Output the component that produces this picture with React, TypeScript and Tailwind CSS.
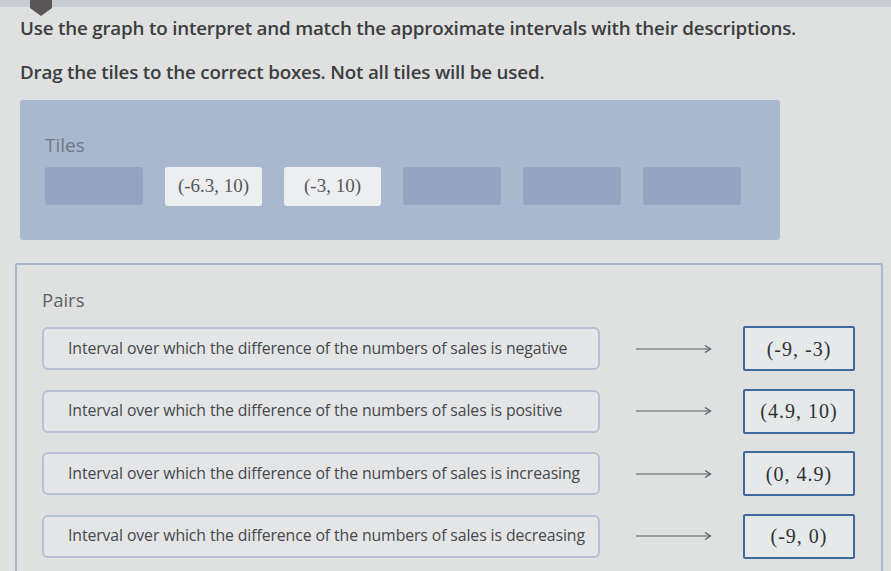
import React from 'react';

const tiles = [
    { label: null },
    { label: '(-6.3, 10)' },
    { label: '(-3, 10)' },
    { label: null },
    { label: null },
    { label: null },
];

const pairs = [
    { text: 'Interval over which the difference of the numbers of sales is negative', answer: '(-9, -3)' },
    { text: 'Interval over which the difference of the numbers of sales is positive', answer: '(4.9, 10)' },
    { text: 'Interval over which the difference of the numbers of sales is increasing', answer: '(0, 4.9)' },
    { text: 'Interval over which the difference of the numbers of sales is decreasing', answer: '(-9, 0)' },
];

const Arrow: React.FC = () => (
    <svg width="78" height="10" viewBox="0 0 78 10" className="text-[#555a60]">
        <line x1="1" y1="5" x2="75" y2="5" stroke="currentColor" strokeWidth="1.2" />
        <path d="M70 1.5 L75.5 5 L70 8.5" fill="none" stroke="currentColor" strokeWidth="1.2" />
    </svg>
);

const App: React.FC = () => {
    return (
        <div
            className="w-[891px] h-[571px] overflow-hidden bg-[#dfe1e1] text-[#3b3d40]"
            style={{ fontFamily: '"Open Sans", "Liberation Sans", sans-serif' }}
        >
            {/* Question header strip */}
            <div className="h-[7px] bg-[#c9ccd2] flex pl-[30px]">
                <svg width="22" height="17" viewBox="0 0 22 17" className="shrink-0">
                    <path d="M0 0 H22 V8 L11 16 L0 8 Z" fill="#5a5658" />
                </svg>
            </div>

            {/* Instructions */}
            <div className="pl-[20px] pt-[9px]">
                <p className="text-[18.8px] font-semibold leading-[24px] tracking-[-0.2px]">
                    Use the graph to interpret and match the approximate intervals with their descriptions.
                </p>
                <p className="mt-[20px] text-[18.8px] font-semibold leading-[24px] tracking-[-0.2px]">
                    Drag the tiles to the correct boxes. Not all tiles will be used.
                </p>
            </div>

            {/* Tiles */}
            <div className="ml-[20px] mt-[16px] w-[760px] h-[140px] rounded-[3px] bg-[#a9b8cf] pl-[25px] pt-[33px]">
                <div className="text-[19px] text-[#6f7784] leading-[24px]">Tiles</div>
                <div className="mt-[10px] flex gap-[22px]">
                    {tiles.map((t, i) =>
                        t.label ? (
                            <div
                                key={i}
                                className="w-[97px] h-[39px] rounded-[3px] bg-[#eceeef] flex items-center justify-center text-[19px] text-[#55585c]"
                                style={{ fontFamily: '"Liberation Serif", serif' }}
                            >
                                {t.label}
                            </div>
                        ) : (
                            <div key={i} className="w-[98px] h-[38px] rounded-[3px] bg-[#93a4c0]" />
                        )
                    )}
                </div>
            </div>

            {/* Pairs */}
            <div className="ml-[15px] mt-[23px] w-[868px] h-[320px] border-2 border-[#a9b6cc] rounded-[2px] pl-[25px] pt-[23px]">
                <div className="text-[18.5px] text-[#5d6166] leading-[24px]">Pairs</div>
                <div className="mt-[14px] flex flex-col gap-[17.5px]">
                    {pairs.map((p) => (
                        <div key={p.answer} className="flex items-center">
                            <div className="w-[558px] h-[43px] rounded-[6px] border-2 border-[#b7c1d1] bg-[#e3e5e6] flex items-center pl-[24px] text-[15.8px] tracking-[-0.1px] text-[#45484c]">
                                {p.text}
                            </div>
                            <div className="ml-[35px]">
                                <Arrow />
                            </div>
                            <div
                                className="ml-[30px] w-[112px] h-[45px] border-2 border-[#41689f] rounded-[2px] bg-[#e6e9ea] flex items-center justify-center text-[20px] tracking-[1px] text-[#2f3134]"
                                style={{ fontFamily: '"Liberation Serif", serif' }}
                            >
                                {p.answer}
                            </div>
                        </div>
                    ))}
                </div>
            </div>
        </div>
    );
};

export default App;
